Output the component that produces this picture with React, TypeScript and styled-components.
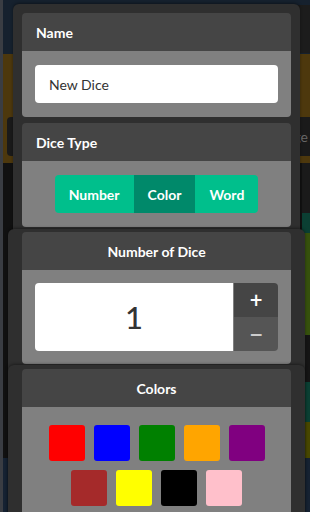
import React, { useState } from 'react';
import styled, { createGlobalStyle } from 'styled-components';

const GlobalStyle = createGlobalStyle`
    html, body {
        margin: 0;
        padding: 0;
        background: #111;
    }
    body {
        font-family: Lato, "Open Sans", "Liberation Sans", sans-serif;
    }
`;

const COLORS = ['red', 'blue', 'green', 'orange', 'purple', 'brown', 'yellow', 'black', 'pink'];
const TYPES = ['Number', 'Color', 'Word'];

const App = () => {
    const [name, setName] = useState('New Dice');
    const [diceType, setDiceType] = useState('Color');
    const [count, setCount] = useState(1);

    return (
        <Stage>
            <GlobalStyle />

            {/* dimmed app behind the sheets */}
            <Backdrop>
                <PageEdge />
                <PageColumn>
                    <TopBar>
                        <TopBarButton />
                    </TopBar>
                    <Band>
                        <BandCard>
                            <BandLabel>Change</BandLabel>
                        </BandCard>
                    </Band>
                    <Body>
                        <BodyMain />
                        <SideStrip>
                            <Strip $h={50} $color="#1a1a1a" />
                            <Strip $h={20} $color="#0b3f33" />
                            <Strip $h={102} $color="#36510d" />
                            <Strip $h={47} $color="#151515" />
                            <Strip $h={40} $color="#0b3f33" />
                            <Strip $h={36} $color="#484700" />
                        </SideStrip>
                    </Body>
                    <Footer />
                </PageColumn>
            </Backdrop>

            <Sheet $top={4} $left={13} $right={10} $pad={9}>
                <Card>
                    <CardHeader>Name</CardHeader>
                    <CardBody>
                        <TextInput value={name} onChange={(e) => setName(e.target.value)} />
                    </CardBody>
                </Card>
                <Card>
                    <CardHeader>Dice Type</CardHeader>
                    <CardBody>
                        <ButtonGroup>
                            {TYPES.map((t) => (
                                <TypeButton key={t} $active={t === diceType} onClick={() => setDiceType(t)}>
                                    {t}
                                </TypeButton>
                            ))}
                        </ButtonGroup>
                    </CardBody>
                </Card>
            </Sheet>

            <Sheet $top={229} $left={8} $right={5} $pad={14} $padTop={3}>
                <Card>
                    <CardHeader $center>Number of Dice</CardHeader>
                    <CardBody $pad="13px">
                        <Stepper>
                            <CountBox>{count}</CountBox>
                            <StepButtons>
                                <StepButton $shade="#454545" onClick={() => setCount(count + 1)}>+</StepButton>
                                <StepButton $shade="#555" $minus onClick={() => setCount(Math.max(1, count - 1))}>
                                    −
                                </StepButton>
                            </StepButtons>
                        </Stepper>
                    </CardBody>
                </Card>
            </Sheet>

            <Sheet $top={365} $left={8} $right={5} $pad={14} $padTop={4}>
                <Card>
                    <CardHeader $center>Colors</CardHeader>
                    <SwatchBody>
                        <SwatchRow>
                            {COLORS.slice(0, 5).map((c) => (
                                <Swatch key={c} $color={c} />
                            ))}
                        </SwatchRow>
                        <SwatchRow>
                            {COLORS.slice(5).map((c) => (
                                <Swatch key={c} $color={c} />
                            ))}
                        </SwatchRow>
                    </SwatchBody>
                </Card>
            </Sheet>
        </Stage>
    );
};

const Stage = styled.div`
    position: relative;
    width: 310px;
    height: 512px;
    overflow: hidden;
    background: #111;
`;

const Backdrop = styled.div`
    display: flex;
    height: 100%;
`;

const PageEdge = styled.div`
    width: 3px;
    background: #3a3d43;
`;

const PageColumn = styled.div`
    flex: 1;
    display: flex;
    flex-direction: column;
`;

const TopBar = styled.div`
    height: 54px;
    background: #16212e;
    display: flex;
    justify-content: flex-end;
    align-items: flex-start;
    padding-top: 5px;
    box-sizing: border-box;
`;

const TopBarButton = styled.div`
    width: 12px;
    height: 48px;
    background: #1c1c1c;
`;

const Band = styled.div`
    height: 109px;
    background: #4d380d;
    padding: 63px 0 7px 4px;
    box-sizing: border-box;
    display: flex;
`;

const BandCard = styled.div`
    flex: 1;
    background: #1a1a1a;
    border-radius: 4px 0 0 4px;
    display: flex;
    align-items: center;
    justify-content: flex-end;
    padding-right: 2px;
    overflow: hidden;
`;

const BandLabel = styled.span`
    color: #666;
    font-size: 14px;
`;

const Body = styled.div`
    flex: 1;
    display: flex;
    background: #111;
`;

const BodyMain = styled.div`
    flex: 1;
`;

const SideStrip = styled.div`
    width: 8px;
    display: flex;
    flex-direction: column;
`;

const Strip = styled.div<{ $h: number; $color: string }>`
    height: ${(p) => p.$h}px;
    background: ${(p) => p.$color};
`;

const Footer = styled.div`
    height: 54px;
    background: #162232;
`;

const Sheet = styled.div<{ $top: number; $left: number; $right: number; $pad: number; $padTop?: number }>`
    position: absolute;
    top: ${(p) => p.$top}px;
    left: ${(p) => p.$left}px;
    right: ${(p) => p.$right}px;
    bottom: -40px;
    background: #2f2f2f;
    border-radius: 6px;
    padding: ${(p) => p.$padTop ?? p.$pad}px ${(p) => p.$pad}px 0;
    display: flex;
    flex-direction: column;
    gap: 6px;
    box-shadow: 0 -1px 3px rgba(0, 0, 0, 0.4);
`;

const Card = styled.div`
    border-radius: 4px;
    overflow: hidden;
`;

const CardHeader = styled.div<{ $center?: boolean }>`
    height: 38px;
    background: #454545;
    color: #fff;
    font-size: 14px;
    font-weight: 700;
    display: flex;
    align-items: center;
    justify-content: ${(p) => (p.$center ? 'center' : 'flex-start')};
    padding: 0 14px;
`;

const CardBody = styled.div<{ $pad?: string }>`
    background: #808080;
    padding: ${(p) => p.$pad ?? '14px 13px'};
    display: flex;
    justify-content: center;
`;

const TextInput = styled.input`
    width: 100%;
    height: 38px;
    box-sizing: border-box;
    border: none;
    border-radius: 4px;
    background: #fff;
    padding: 0 14px;
    font-family: Lato, "Liberation Sans", sans-serif;
    font-size: 14px;
    color: #333;
    outline: none;
`;

const ButtonGroup = styled.div`
    display: flex;
    border-radius: 4px;
    overflow: hidden;
`;

const TypeButton = styled.button<{ $active: boolean }>`
    height: 38px;
    border: none;
    padding: 0 14px;
    background: ${(p) => (p.$active ? '#00896a' : '#00bf8c')};
    color: #fff;
    font-family: Lato, "Liberation Sans", sans-serif;
    font-size: 14px;
    font-weight: 700;
    cursor: pointer;
`;

const Stepper = styled.div`
    flex: 1;
    display: flex;
    height: 68px;
`;

const CountBox = styled.div`
    flex: 1;
    background: #fff;
    border-radius: 4px 0 0 4px;
    display: flex;
    align-items: center;
    justify-content: center;
    font-size: 31px;
    font-weight: 500;
    color: #333;
`;

const StepButtons = styled.div`
    width: 44px;
    display: flex;
    flex-direction: column;
    border-radius: 0 4px 4px 0;
    overflow: hidden;
    margin-left: 1px;
`;

const StepButton = styled.button<{ $shade: string; $minus?: boolean }>`
    flex: 1;
    border: none;
    background: ${(p) => p.$shade};
    color: ${(p) => (p.$minus ? '#ccc' : '#fff')};
    font-family: "DejaVu Sans", sans-serif;
    font-size: 17px;
    font-weight: 700;
    line-height: 1;
    padding: 0;
    cursor: pointer;
`;

const SwatchBody = styled.div`
    background: #808080;
    padding: 18px 0 20px;
    display: flex;
    flex-direction: column;
    align-items: center;
    gap: 9px;
`;

const SwatchRow = styled.div`
    display: flex;
    gap: 9px;
`;

const Swatch = styled.div<{ $color: string }>`
    width: 36px;
    height: 36px;
    border-radius: 3px;
    background: ${(p) => p.$color};
`;

export default App;
